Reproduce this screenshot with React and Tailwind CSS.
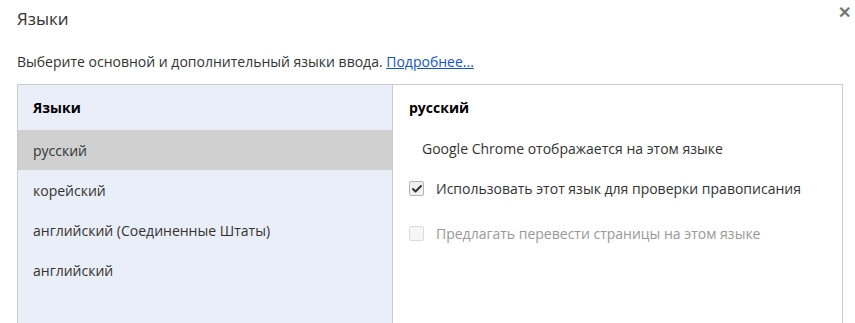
import { Check } from 'lucide-react';

const langs = ['русский', 'корейский', 'английский (Соединенные Штаты)', 'английский'];

function Box({ checked, disabled }) {
  return (
    <span
      className={`flex h-[15px] w-[15px] shrink-0 items-center justify-center rounded-[2px] border ${
        disabled ? 'border-[#dcdcdc] bg-[#f6f6f6]' : 'border-[#b5b5b5] bg-[#f0f0f0]'
      }`}
    >
      {checked && <Check size={12} strokeWidth={4} className="text-[#333]" />}
    </span>
  );
}

export default function App() {
  return (
    <div className="relative h-[323px] w-[855px] overflow-hidden bg-white font-['Open_Sans',sans-serif] text-[#333]">
      <div className="absolute right-[4px] top-[0px] text-[16px] font-bold text-[#777]">✕</div>

      <div className="px-[17px] pt-[7px] text-[17px] leading-[24px]">Языки</div>
      <div className="px-[17px] pt-[21px] text-[14px] leading-[20px]">
        Выберите основной и дополнительный языки ввода.{' '}
        <a href="#" className="text-[#1155cc] underline">Подробнее...</a>
      </div>

      <div className="ml-[17px] mt-[12px] flex h-[260px] w-[826px] border border-[#cbcbcb] text-[14px]">
        <div className="w-[375px] shrink-0 border-r border-[#cbcbcb] bg-[#eaeef8]">
          <div className="flex h-[45px] items-center px-[15px] font-bold text-black">Языки</div>
          {langs.map((l, i) => (
            <div key={l} className={`flex h-[40px] items-center px-[15px] ${i === 0 ? 'bg-[#d0d0d0]' : ''}`}>
              {l}
            </div>
          ))}
        </div>
        <div className="flex-1 px-[16px]">
          <div className="flex h-[45px] items-center font-bold text-black">русский</div>
          <div className="flex h-[37px] items-center pl-[13px]">Google Chrome отображается на этом языке</div>
          <div className="flex h-[43px] items-center gap-[12px]">
            <Box checked />
            <span>Использовать этот язык для проверки правописания</span>
          </div>
          <div className="flex h-[46px] items-center gap-[12px] text-[#999]">
            <Box disabled />
            <span>Предлагать перевести страницы на этом языке</span>
          </div>
        </div>
      </div>
    </div>
  );
}
